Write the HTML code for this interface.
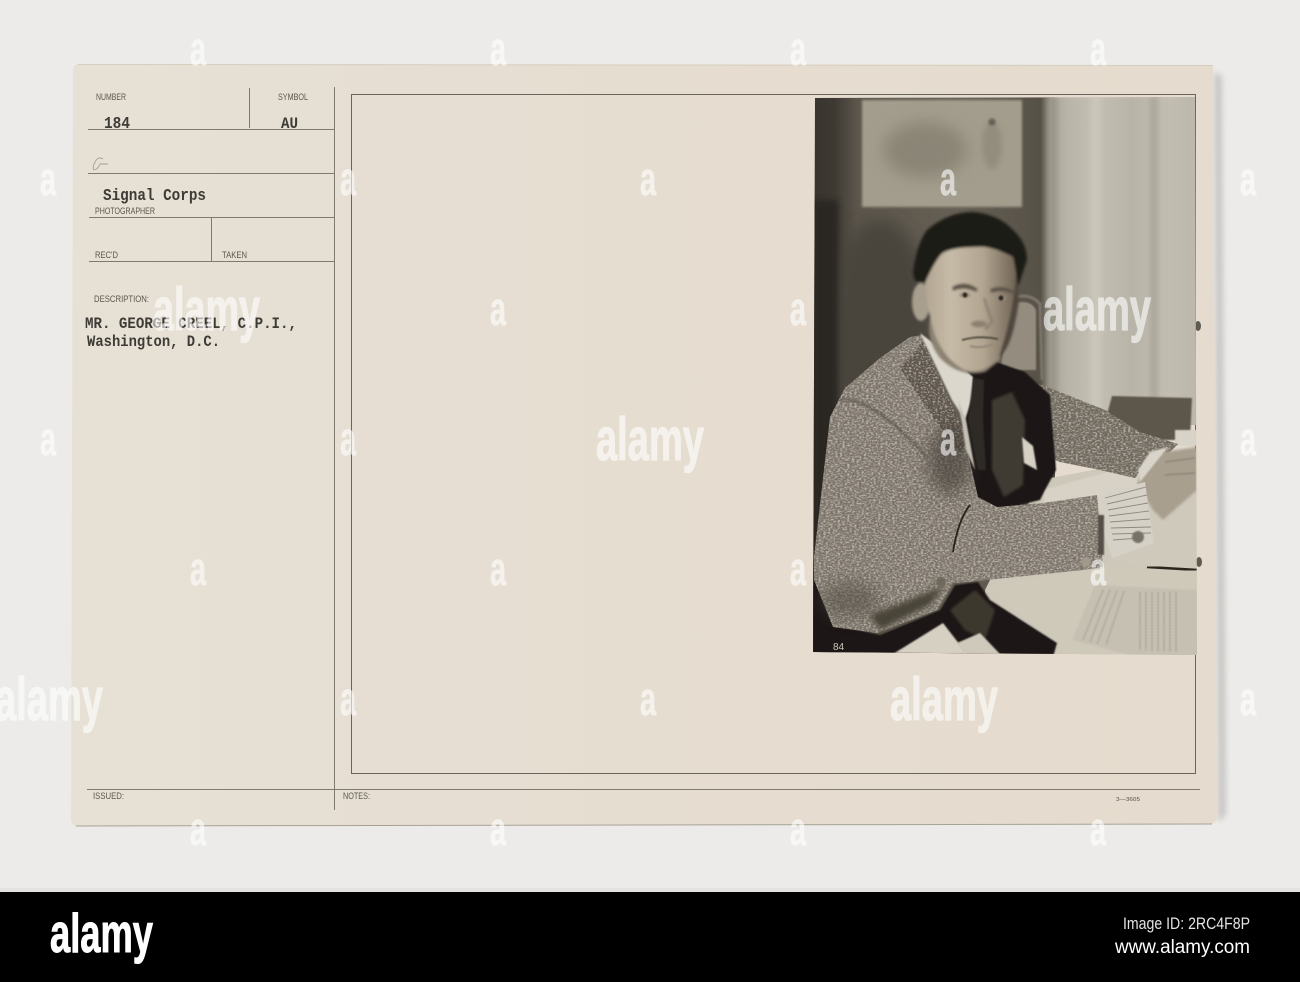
<!DOCTYPE html>
<html><head><meta charset="utf-8"><title>Signal Corps photo record</title>
<style>
html,body{margin:0;padding:0;background:#000;width:1300px;height:982px;overflow:hidden}
svg{display:block}
.lab{font-family:"Liberation Sans",sans-serif;font-size:9px;fill:#5a554c}
.typ{font-family:"Liberation Mono",monospace;font-weight:bold;fill:#3e3a36}
.wm{font-family:"Liberation Sans",sans-serif;font-weight:bold;fill:#fff;stroke:#fff}
</style></head><body>
<svg width="1300" height="982" viewBox="0 0 1300 982" xmlns="http://www.w3.org/2000/svg">
<defs>
<filter id="soft" x="-5%" y="-5%" width="110%" height="110%"><feGaussianBlur stdDeviation=".35"/></filter>
<filter id="b05" x="-10%" y="-10%" width="120%" height="120%"><feGaussianBlur stdDeviation=".7"/></filter>
<filter id="b1" x="-20%" y="-20%" width="140%" height="140%"><feGaussianBlur stdDeviation="1.3"/></filter>
<filter id="b3" x="-30%" y="-30%" width="160%" height="160%"><feGaussianBlur stdDeviation="3"/></filter>
<filter id="b8" x="-50%" y="-50%" width="200%" height="200%"><feGaussianBlur stdDeviation="8"/></filter>
<filter id="tweed" x="0" y="0" width="100%" height="100%">
<feTurbulence type="fractalNoise" baseFrequency="0.42 0.62" numOctaves="3" seed="4" result="n"/>
<feColorMatrix in="n" type="matrix" values="0 0 0 0 .12  0 0 0 0 .1  0 0 0 0 .08  0 0 0 -1.6 .95" result="d"/>
<feComposite in="d" in2="SourceGraphic" operator="in" result="c"/>
<feColorMatrix in="n" type="matrix" values="0 0 0 0 .85  0 0 0 0 .82  0 0 0 0 .76  0 0 0 1.4 -.68" result="l"/>
<feComposite in="l" in2="SourceGraphic" operator="in" result="c2"/>
<feMerge><feMergeNode in="SourceGraphic"/><feMergeNode in="c"/><feMergeNode in="c2"/></feMerge>
<feGaussianBlur stdDeviation=".3"/>
</filter>
<linearGradient id="paper" x1="0" x2="1" y1="0" y2="0"><stop offset="0" stop-color="#e7e1d5"/><stop offset=".3" stop-color="#e6ded2"/><stop offset="1" stop-color="#e5dbce"/></linearGradient>
<linearGradient id="wall" x1="0" x2="1"><stop offset="0" stop-color="#36322c"/><stop offset=".1" stop-color="#3e3a33"/><stop offset=".19" stop-color="#5b554b"/><stop offset=".6" stop-color="#655f54"/><stop offset="1" stop-color="#544f45"/></linearGradient>
<linearGradient id="curt" x1="0" x2="1"><stop offset="0" stop-color="#aaa599"/><stop offset=".12" stop-color="#b9b4a8"/><stop offset=".3" stop-color="#c4bfb3"/><stop offset=".55" stop-color="#b9b4a8"/><stop offset=".8" stop-color="#c2bdb1"/><stop offset="1" stop-color="#bbb6aa"/></linearGradient>
<linearGradient id="facegrad" x1="0" x2="1"><stop offset="0" stop-color="#b2a693"/><stop offset=".28" stop-color="#c6bba7"/><stop offset=".62" stop-color="#b3a691"/><stop offset="1" stop-color="#6d6153"/></linearGradient>
<clipPath id="ph"><polygon points="815,98 1195,97 1197,655 813,652"/></clipPath>
</defs>

<rect width="1300" height="892" fill="#ecebe9"/>
<rect y="888" width="1300" height="4" fill="#e4e2e0"/>
<rect y="892" width="1300" height="90" fill="#000"/>

<!-- card -->
<polygon points="1214,72 1222,76 1226,815 1218,822" fill="#c9c7c5" filter="url(#b3)"/>
<path d="M78,64 L1213,65 L1217,820 L1212,824 L78,826 Q71,826 71,819 L73,70 Q74,64 78,64Z" fill="url(#paper)"/>
<path d="M76,826 L1212,824" stroke="#a8a296" stroke-width="1"/>
<path d="M78,64.5 L1213,65.5" stroke="#d6cdbd" stroke-width="1"/>

<!-- form lines -->
<g stroke="#7f7a6e" stroke-width="1" fill="none" filter="url(#soft)">
<path d="M88,129.5H334M88,173.5H334M89,217.5H334M89,261.5H334"/>
<path d="M249.5,88V128M211.5,218V261"/>
<path d="M334.5,87V810"/>
<path d="M87,789.5H1200"/>
</g>
<path d="M351.5,94.5H1195.5V773.5H351.5Z" fill="none" stroke="#6a655b" stroke-width="1" filter="url(#soft)"/>

<!-- labels -->
<g filter="url(#soft)">
<text class="lab" x="96" y="100" textLength="30" lengthAdjust="spacingAndGlyphs">NUMBER</text>
<text class="lab" x="278" y="100" textLength="30" lengthAdjust="spacingAndGlyphs">SYMBOL</text>
<text class="typ" x="104" y="128" font-size="17" textLength="26" lengthAdjust="spacingAndGlyphs">184</text>
<text class="typ" x="281" y="128" font-size="16" textLength="17" lengthAdjust="spacingAndGlyphs">AU</text>
<text class="typ" x="103" y="200" font-size="16.5" textLength="103" lengthAdjust="spacingAndGlyphs">Signal Corps</text>
<text class="lab" x="95" y="214" textLength="60" lengthAdjust="spacingAndGlyphs">PHOTOGRAPHER</text>
<text class="lab" x="95" y="258" textLength="23" lengthAdjust="spacingAndGlyphs">REC'D</text>
<text class="lab" x="222" y="258" textLength="25" lengthAdjust="spacingAndGlyphs">TAKEN</text>
<text class="lab" x="94" y="302" textLength="55" lengthAdjust="spacingAndGlyphs">DESCRIPTION:</text>
<text class="typ" x="85" y="328" font-size="16" textLength="212" lengthAdjust="spacingAndGlyphs">MR. GEORGE CREEL, C.P.I.,</text>
<text class="typ" x="87" y="346" font-size="16" textLength="133" lengthAdjust="spacingAndGlyphs">Washington, D.C.</text>
<text class="lab" x="93" y="799" textLength="31" lengthAdjust="spacingAndGlyphs">ISSUED:</text>
<text class="lab" x="343" y="799" textLength="27" lengthAdjust="spacingAndGlyphs">NOTES:</text>
<text class="lab" x="1116" y="801" textLength="24" lengthAdjust="spacingAndGlyphs" style="font-size:5.5px">3—3605</text>
</g>
<path d="M103,159 Q98,156 95,162 Q92,168 94,170 Q98,169 100,164 L108,164" fill="none" stroke="#a5a093" stroke-width=".9"/>

<!-- photo -->
<ellipse cx="1198" cy="326" rx="3" ry="5" fill="#5f5a52"/>
<ellipse cx="1199" cy="562" rx="3" ry="5" fill="#5f5a52"/>
<g clip-path="url(#ph)">
<rect x="810" y="95" width="245" height="565" fill="url(#wall)"/>
<ellipse cx="880" cy="340" rx="55" ry="120" fill="#4a453c" filter="url(#b8)"/>
<rect x="812" y="200" width="26" height="460" fill="#2a2622" filter="url(#b3)"/>
<rect x="1050" y="95" width="150" height="330" fill="url(#curt)"/>
<rect x="1045" y="95" width="12" height="320" fill="#9a9589" filter="url(#b3)"/>
<rect x="1091" y="95" width="10" height="320" fill="#cbc6ba" filter="url(#b3)"/>
<rect x="1150" y="95" width="8" height="320" fill="#aca79b" filter="url(#b3)"/>
<!-- map -->
<rect x="862" y="100" width="160" height="107" fill="#a39d8d" filter="url(#b1)"/>
<ellipse cx="925" cy="150" rx="42" ry="28" fill="#8a8576" filter="url(#b8)"/>
<ellipse cx="992" cy="145" rx="10" ry="24" fill="#928d7d" filter="url(#b3)"/>
<circle cx="992" cy="122" r="3.5" fill="#625d52" filter="url(#b1)"/>
<!-- chair -->
<path d="M1012,298 Q1030,292 1040,304 L1042,380" fill="none" stroke="#7b756a" stroke-width="3" filter="url(#b05)"/>
<path d="M1012,304 Q1030,298 1036,310 L1036,370 L1000,370Z" fill="#948c7f" filter="url(#b05)"/>
<!-- desk back -->
<polygon points="1112,396 1192,398 1190,440 1100,440" fill="#5d564b" filter="url(#b05)"/>
<rect x="1175" y="430" width="22" height="16" fill="#d8d3c8" filter="url(#b05)"/>
<!-- table and papers -->
<polygon points="1040,480 1200,450 1200,660 985,660 985,590" fill="#cec8ba"/>
<polygon points="1043,490 1115,470 1140,480 1137,490 1100,497 1044,503" fill="#d8d2c6" filter="url(#b05)"/>
<polygon points="1153,505 1198,488 1198,569 1147,567 1110,560" fill="#cfc9bc" filter="url(#b05)"/>
<polygon points="987,587 1103,567 1198,571 1198,658 1057,658 1057,643" fill="#cfc9ba" filter="url(#b05)"/>
<polygon points="1072,640 1095,585 1198,590 1198,656 1130,655" fill="#c6c0b2" filter="url(#b05)"/>
<g stroke="#8b8679" stroke-width="1.5" stroke-dasharray="2 1" opacity=".55" filter="url(#b05)">
<path d="M1103,590 L1083,640M1110,590 L1090,642M1117,591 L1097,644M1124,591 L1106,645"/>
<path d="M1140,592V650M1146,592V650M1152,592V652M1158,592V652M1164,592V652M1170,592V652M1176,592V652"/>
</g>
<path d="M1147,567 L1198,570" stroke="#29251f" stroke-width="2.5" filter="url(#soft)"/>
<!-- right arm -->
<polygon points="1023,378 1060,392 1105,410 1140,432 1178,444 1170,452 1145,465 1135,478 1100,470 1060,462 1020,445" fill="#7a7367" filter="url(#tweed)"/>
<!-- bottom darks -->
<path d="M813,560 L835,625 L880,635 L940,610 L955,585 L978,582 L990,600 L1057,643 L1053,657 L813,657Z" fill="#1b1714" filter="url(#b05)"/>
<polygon points="950,610 975,590 995,610 985,640 965,630" fill="#3e392f" filter="url(#b1)"/>
<polygon points="893,654 943,623 967,654" fill="#d6d0c3" filter="url(#b05)"/>
<polygon points="957,643 980,633 1000,654 965,654" fill="#cfc9bc" filter="url(#b05)"/>
<!-- vest dark -->
<path d="M965,372 L985,358 L1025,372 L1050,395 L1056,470 L1045,490 L1040,500 L1000,510 L970,500 L960,440Z" fill="#1a1613" filter="url(#b05)"/>
<!-- jacket -->
<path d="M830,417 L845,388 L880,358 L910,337 L922,335 L940,390 L965,440 L978,497 L997,507 L1043,503 L1097,495 L1103,567 L1083,570 L967,582 L953,583 L937,610 L877,633 L833,627 L814,580 L814,557Z" fill="#8b8378" filter="url(#tweed)"/>
<path d="M900,368 L925,340 L945,390 L968,440 L960,452 L935,420Z" fill="#5e574c" filter="url(#tweed)"/>
<path d="M992,400 L1012,392 L1025,420 L1023,485 L1004,497 L992,470Z" fill="#403b32" filter="url(#b1)"/>
<path d="M1022,437 L1033,446 L1037,470 L1024,463Z" fill="#d7d1c5" filter="url(#b05)"/>
<path d="M870,615 Q905,602 945,585 L930,605 L880,630Z" fill="#494437" filter="url(#b3)"/>
<ellipse cx="850" cy="600" rx="30" ry="18" fill="#4b463c" opacity=".5" filter="url(#b8)"/>
<ellipse cx="950" cy="460" rx="22" ry="35" fill="#3a352d" opacity=".55" filter="url(#b8)"/>
<path d="M840,400 Q870,395 925,455" stroke="#4f4a41" stroke-width="1.5" fill="none" filter="url(#b1)"/>
<path d="M970,505 Q958,520 953,552" stroke="#26221e" stroke-width="1.8" fill="none" filter="url(#soft)"/>
<circle cx="941" cy="582" r="5" fill="#6e675c" filter="url(#b05)"/>
<circle cx="1086" cy="562" r="5" fill="#a0998c" filter="url(#b05)"/>
<!-- collar shirt -->
<polygon points="920,333 945,352 973,377 973,395 965,420 952,400" fill="#dbd7cc" filter="url(#b05)"/>
<polygon points="973,378 984,380 983,420 986,470 978,470 968,420" fill="#2d2925" filter="url(#b05)"/>
<polygon points="958,400 966,420 975,470 966,450" fill="#c5c0b4" filter="url(#b05)"/>
<!-- hand -->
<path d="M1137,483 L1157,453 L1197,447 L1197,490 L1163,520 L1153,510Z" fill="#a99f8f" filter="url(#b1)"/>
<path d="M1138,470 L1150,452 L1168,447 L1140,482Z" fill="#d9d4c9" filter="url(#b05)"/>
<path d="M1165,462 L1195,458M1165,475 L1195,473" stroke="#8a8172" stroke-width="1.2" filter="url(#b05)"/>
<!-- cuff -->
<path d="M1097,495 L1145,482 L1154,543 L1112,558 L1103,530Z" fill="#d6d1c6" filter="url(#soft)"/>
<g stroke="#8e897e" stroke-width=".9" fill="none" filter="url(#soft)"><path d="M1105,498 L1146,487M1107,504 L1147,495M1108,510 L1148,503M1109,516 L1149,511M1110,522 L1150,519M1111,528 L1151,527M1112,534 L1151,533M1113,540 L1140,538"/></g>
<circle cx="1138" cy="537" r="6" fill="#77716a" filter="url(#b05)"/>
<rect x="1098" y="515" width="6" height="40" fill="#55504a" filter="url(#b05)"/>
<!-- head -->
<g filter="url(#b1)">
<path d="M930,318 Q926,340 940,358 Q960,378 985,372 L1000,360 L1000,330Z" fill="#8d8272"/>
<ellipse cx="921" cy="302" rx="9" ry="19" fill="#a99f8f"/>
<path d="M925,283 Q932,255 950,250 Q985,240 1013,257 Q1020,275 1016,300 Q1012,335 1000,355 Q985,375 965,370 Q945,360 935,335 Q927,310 925,283Z" fill="url(#facegrad)"/>
<path d="M1016,272 Q1014,312 999,356 Q1012,350 1019,300Z" fill="#4f473d"/>
<path d="M913,273 Q916,245 927,230 Q948,212 973,212 Q998,214 1013,230 Q1027,243 1027,260 L1018,287 Q1015,265 1013,257 Q990,245 977,247 Q955,247 943,252 Q934,262 925,283 L915,281Z" fill="#1e1a17"/>
<path d="M952,287 Q965,279 978,289 L976,292 Q965,286 953,291Z" fill="#5d5448"/>
<path d="M990,289 Q1003,284 1014,291 L1013,294 Q1003,289 991,293Z" fill="#5d5448"/>
<ellipse cx="979" cy="324" rx="8" ry="3.5" fill="#8c8070"/>
<path d="M984,298 L992,322 L985,330" fill="none" stroke="#8a7e6e" stroke-width="2.5"/>
</g>
<g filter="url(#b05)">
<ellipse cx="965" cy="295" rx="6" ry="3" fill="#a59a87"/>
<ellipse cx="1001" cy="298" rx="5.5" ry="3" fill="#94897a"/>
<circle cx="965" cy="295" r="2.7" fill="#2e2924"/>
<circle cx="1001" cy="298" r="2.7" fill="#2e2924"/>
<path d="M962,340 Q980,335 998,339" stroke="#4d4539" stroke-width="1.8" fill="none"/>
<path d="M970,346 Q982,349 993,344" stroke="#93887a" stroke-width="2" fill="none"/>
</g>
<text x="833" y="650" font-family="Liberation Sans,sans-serif" font-size="10" fill="#cfc9bb">84</text>
</g>

<!-- watermarks: small -->
<g opacity=".6" font-size="47" stroke-width=".6">
<text class="wm" x="190" y="65" textLength="16" lengthAdjust="spacingAndGlyphs">a</text><text class="wm" x="490" y="65" textLength="16" lengthAdjust="spacingAndGlyphs">a</text><text class="wm" x="790" y="65" textLength="16" lengthAdjust="spacingAndGlyphs">a</text><text class="wm" x="1090" y="65" textLength="16" lengthAdjust="spacingAndGlyphs">a</text>
<text class="wm" x="40" y="195" textLength="16" lengthAdjust="spacingAndGlyphs">a</text><text class="wm" x="340" y="195" textLength="16" lengthAdjust="spacingAndGlyphs">a</text><text class="wm" x="640" y="195" textLength="16" lengthAdjust="spacingAndGlyphs">a</text><text class="wm" x="940" y="195" textLength="16" lengthAdjust="spacingAndGlyphs">a</text><text class="wm" x="1240" y="195" textLength="16" lengthAdjust="spacingAndGlyphs">a</text>
<text class="wm" x="490" y="325" textLength="16" lengthAdjust="spacingAndGlyphs">a</text><text class="wm" x="790" y="325" textLength="16" lengthAdjust="spacingAndGlyphs">a</text>
<text class="wm" x="40" y="455" textLength="16" lengthAdjust="spacingAndGlyphs">a</text><text class="wm" x="340" y="455" textLength="16" lengthAdjust="spacingAndGlyphs">a</text><text class="wm" x="940" y="455" textLength="16" lengthAdjust="spacingAndGlyphs">a</text><text class="wm" x="1240" y="455" textLength="16" lengthAdjust="spacingAndGlyphs">a</text>
<text class="wm" x="190" y="585" textLength="16" lengthAdjust="spacingAndGlyphs">a</text><text class="wm" x="490" y="585" textLength="16" lengthAdjust="spacingAndGlyphs">a</text><text class="wm" x="790" y="585" textLength="16" lengthAdjust="spacingAndGlyphs">a</text><text class="wm" x="1090" y="585" textLength="16" lengthAdjust="spacingAndGlyphs">a</text>
<text class="wm" x="340" y="715" textLength="16" lengthAdjust="spacingAndGlyphs">a</text><text class="wm" x="640" y="715" textLength="16" lengthAdjust="spacingAndGlyphs">a</text><text class="wm" x="1240" y="715" textLength="16" lengthAdjust="spacingAndGlyphs">a</text>
<text class="wm" x="190" y="845" textLength="16" lengthAdjust="spacingAndGlyphs">a</text><text class="wm" x="490" y="845" textLength="16" lengthAdjust="spacingAndGlyphs">a</text><text class="wm" x="790" y="845" textLength="16" lengthAdjust="spacingAndGlyphs">a</text><text class="wm" x="1090" y="845" textLength="16" lengthAdjust="spacingAndGlyphs">a</text>
</g>
<!-- watermarks: large -->
<g opacity=".6" font-size="60" stroke-width="1.2">
<text class="wm" x="153" y="330" textLength="107" lengthAdjust="spacingAndGlyphs">alamy</text>
<text class="wm" x="1043" y="330" textLength="108" lengthAdjust="spacingAndGlyphs">alamy</text>
<text class="wm" x="596" y="460" textLength="108" lengthAdjust="spacingAndGlyphs">alamy</text>
<text class="wm" x="-5" y="720" textLength="108" lengthAdjust="spacingAndGlyphs">alamy</text>
<text class="wm" x="890" y="720" textLength="108" lengthAdjust="spacingAndGlyphs">alamy</text>
</g>

<!-- footer -->
<text class="wm" x="50" y="952" font-size="55" stroke-width="1" textLength="103" lengthAdjust="spacingAndGlyphs">alamy</text>
<text x="1123" y="929" font-family="Liberation Sans,sans-serif" font-size="17" fill="#e4e4e4" textLength="127" lengthAdjust="spacingAndGlyphs">Image ID: 2RC4F8P</text>
<text x="1115" y="953" font-family="Liberation Sans,sans-serif" font-size="19" fill="#fff" textLength="135" lengthAdjust="spacingAndGlyphs">www.alamy.com</text>
</svg>
</body></html>
